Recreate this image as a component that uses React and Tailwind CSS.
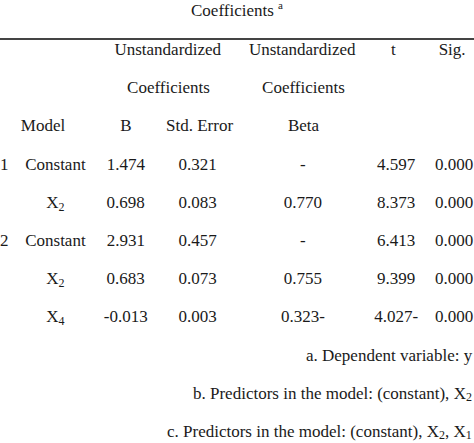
const cols = [
  'w-[7px] text-right',
  'w-[97px] text-center',
  'w-[44px] text-center',
  'w-[100px] text-center',
  'w-[111px] text-center',
  'w-[76px] text-center',
  'w-[40px] text-center',
];

function X({ n }) {
  return (
    <>
      X<span className="relative top-[3px] text-[12px]">{n}</span>
    </>
  );
}

const rows = [
  ['1', 'Constant', '1.474', '0.321', '-', '4.597', '0.000'],
  ['', <X n="2" />, '0.698', '0.083', '0.770', '8.373', '0.000'],
  ['2', 'Constant', '2.931', '0.457', '-', '6.413', '0.000'],
  ['', <X n="2" />, '0.683', '0.073', '0.755', '9.399', '0.000'],
  ['', <X n="4" />, '-0.013', '0.003', '0.323-', '4.027-', '0.000'],
];

function Row({ children, className = '' }) {
  return <div className={`flex h-[38.2px] shrink-0 whitespace-nowrap ${className}`}>{children}</div>;
}

export default function App() {
  return (
    <div className="w-[474px] h-[443px] overflow-hidden bg-white text-[#1a1a1a] text-[17px] leading-[20px] font-['Liberation_Serif','Times_New_Roman',serif]">
      <div className="pt-[1px] text-center">
        Coefficients <span className="relative -top-[7px] text-[11px]">a</span>
      </div>
      <div className="mt-[16px] border-t-2 border-[#444]" />

      <Row>
        <div className="w-[114px]" />
        <div className="w-[109px] text-center">Unstandardized</div>
        <div className="w-[26px]" />
        <div className="w-[109px] text-center">Unstandardized</div>
        <div className="w-[74px] text-center">t</div>
        <div className="w-[44px] text-center">Sig.</div>
      </Row>
      <Row>
        <div className="w-[114px]" />
        <div className="w-[109px] text-center">Coefficients</div>
        <div className="w-[26px]" />
        <div className="w-[109px] text-center">Coefficients</div>
      </Row>
      <Row>
        <div className="w-[86px] text-center">Model</div>
        <div className="w-[80px] text-center">B</div>
        <div className="w-[66px] text-center">Std. Error</div>
        <div className="w-[17px]" />
        <div className="w-[109px] text-center">Beta</div>
      </Row>

      {rows.map((r, i) => (
        <Row key={i}>
          {r.map((c, j) => (
            <div key={j} className={cols[j]}>
              {c}
            </div>
          ))}
        </Row>
      ))}

      <Row className="pl-[306px]">a. Dependent variable: y</Row>
      <Row className="pl-[193px]">
        b. Predictors in the model: (constant), <X n="2" />
      </Row>
      <Row className="pl-[167px]">
        c. Predictors in the model: (constant), <X n="2" />, <X n="1" />
      </Row>
    </div>
  );
}
